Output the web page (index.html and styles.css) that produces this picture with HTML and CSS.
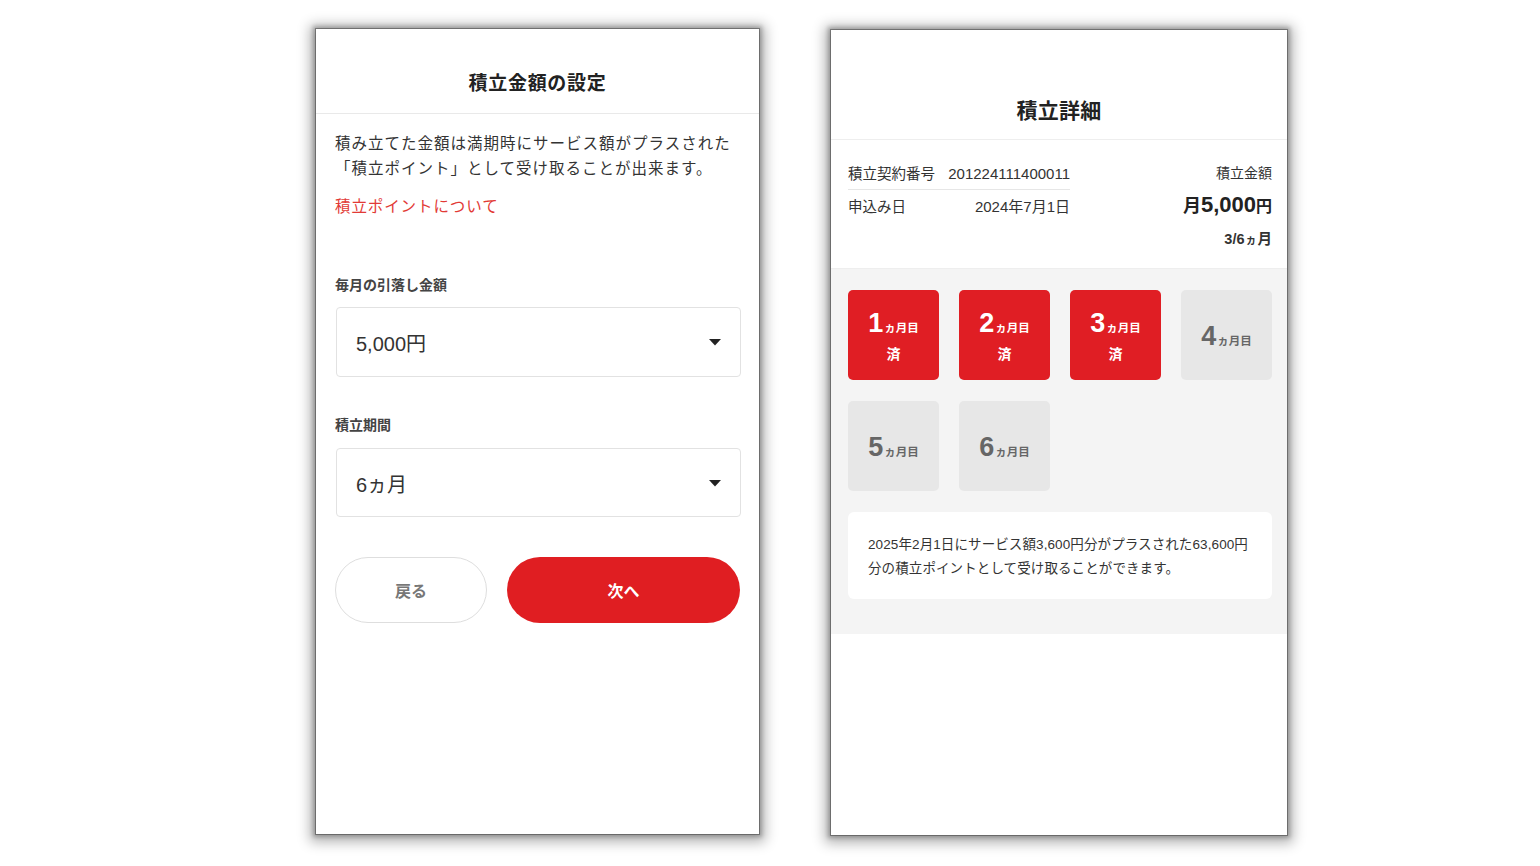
FILE: index.html
```html
<!DOCTYPE html>
<html lang="ja">
<head>
<meta charset="utf-8">
<title>積立</title>
<link rel="stylesheet" href="styles.css">
</head>
<body>
<div class="stage">
  <section class="panel panel-left">
    <header class="panel-head"><h1 class="title">積立金額の設定</h1></header>
    <div class="panel-body">
      <p class="lead">積み立てた金額は満期時にサービス額がプラスされた<br>「積立ポイント」として受け取ることが出来ます。</p>
      <a class="link">積立ポイントについて</a>
      <div class="field-label first">毎月の引落し金額</div>
      <div class="select">
        <span class="select-value">5,000円</span>
        <svg class="caret" width="12" height="7" viewBox="0 0 12 7"><path d="M0 0H12L6 6.5Z" fill="#222"/></svg>
      </div>
      <div class="field-label second">積立期間</div>
      <div class="select select2">
        <span class="select-value">6ヵ月</span>
        <svg class="caret" width="12" height="7" viewBox="0 0 12 7"><path d="M0 0H12L6 6.5Z" fill="#222"/></svg>
      </div>
      <div class="buttons">
        <button class="btn btn-back">戻る</button>
        <button class="btn btn-next">次へ</button>
      </div>
    </div>
  </section>

  <section class="panel panel-right">
    <header class="panel-head head-right"><h1 class="title title-right">積立詳細</h1></header>
    <div class="info">
      <div class="info-left">
        <div class="info-row row1"><span class="k">積立契約番号</span><span class="v">201224111400011</span></div>
        <div class="info-row row2"><span class="k">申込み日</span><span class="v">2024年7月1日</span></div>
      </div>
      <div class="info-right">
        <div class="amt-label">積立金額</div>
        <div class="amt"><span class="amt-pre">月</span><span class="amt-num">5,000</span><span class="amt-yen">円</span></div>
        <div class="amt-prog">3/6<span class="small">ヵ</span>月</div>
      </div>
    </div>
    <div class="gray">
      <div class="tiles">
        <div class="tile done"><div class="tl1"><span class="n">1</span><span class="u">ヵ月目</span></div><div class="tl2">済</div></div>
        <div class="tile done"><div class="tl1"><span class="n">2</span><span class="u">ヵ月目</span></div><div class="tl2">済</div></div>
        <div class="tile done"><div class="tl1"><span class="n">3</span><span class="u">ヵ月目</span></div><div class="tl2">済</div></div>
        <div class="tile"><div class="tl1"><span class="n">4</span><span class="u">ヵ月目</span></div></div>
        <div class="tile"><div class="tl1"><span class="n">5</span><span class="u">ヵ月目</span></div></div>
        <div class="tile"><div class="tl1"><span class="n">6</span><span class="u">ヵ月目</span></div></div>
      </div>
      <div class="note">2025年2月1日にサービス額3,600円分がプラスされた63,600円<br>分の積立ポイントとして受け取ることができます。</div>
    </div>
  </section>
</div>
</body>
</html>
```

FILE: styles.css
```css
* { box-sizing: border-box; }
html, body { margin: 0; padding: 0; background: #fff; }
body {
  font-family: "Liberation Sans", "Noto Sans CJK JP", "Noto Sans", sans-serif;
  color: #333;
  width: 1540px;
  height: 866px;
  overflow: hidden;
}
.stage {
  display: flex;
  align-items: flex-start;
  gap: 72px;
  padding: 29px 0 0 316px;
}
.panel {
  background: #fff;
  height: 805px;
  box-shadow: 0 0 0 1px rgba(0,0,0,0.3), 0 0 4px 3px rgba(0,0,0,0.22), 0 2px 12px 6px rgba(0,0,0,0.3);
}
.panel-left { width: 443px; }
.panel-right { width: 456px; margin-top: 1px; }

.panel-head {
  padding: 41px 0 15px;
  border-bottom: 1px solid #e9e9e9;
  text-align: center;
}
.title {
  margin: 0;
  font-size: 19px;
  line-height: 28px;
  font-weight: 700;
  color: #222;
  letter-spacing: 0.7px;
}
.head-right { padding: 67px 0 14px; border-bottom-color: #eeeeee; }
.title-right { font-size: 21px; letter-spacing: 0.3px; }

.panel-body { padding: 17px 18px 0 19px; }
.lead {
  margin: 0;
  font-size: 15.5px;
  line-height: 25px;
  letter-spacing: 1px;
  color: #333;
}
.link {
  display: block;
  margin-top: 13px;
  font-size: 15.5px;
  line-height: 25px;
  color: #e23a36;
  letter-spacing: 0.9px;
}
.field-label {
  font-size: 14px;
  font-weight: 700;
  line-height: 20px;
  color: #444;
}
.field-label.first { margin-top: 56px; }
.field-label.second { margin-top: 38px; }
.select {
  margin-top: 12px;
  margin-left: 1px;
  height: 70px;
  border: 1px solid #e2e2e2;
  border-radius: 4px;
  display: flex;
  align-items: center;
  justify-content: space-between;
  padding: 0 19px 0 19px;
}
.select2 { margin-top: 13px; height: 69px; }
.select-value { font-size: 20px; color: #333; margin-top: 1px; }
.caret { display: block; margin-top: 1px; }

.buttons {
  display: flex;
  gap: 20px;
  margin-top: 40px;
}
.btn {
  font-family: inherit;
  height: 66px;
  border-radius: 33px;
  font-size: 16px;
  font-weight: 700;
  cursor: pointer;
}
.btn-back {
  width: 152px;
  background: #fff;
  border: 1px solid #dedede;
  color: #777;
}
.btn-next {
  width: 233px;
  background: #e01e22;
  border: none;
  color: #fff;
}

.info {
  display: flex;
  justify-content: space-between;
  padding: 23px 15px 17px 17px;
  border-bottom: 1px solid #eeeeee;
  height: 129px;
}
.info-left { width: 222px; }
.info-row {
  display: flex;
  justify-content: space-between;
  font-size: 15px;
  line-height: 22px;
  color: #333;
}
.info-row .k { font-size: 14.5px; }
.row1 { padding-bottom: 4px; border-bottom: 1px solid #e6e6e6; }
.row2 { padding-top: 6px; }
.info-right { text-align: right; }
.amt-label { font-size: 14px; line-height: 22px; color: #333; margin-top: -1px; }
.amt { line-height: 42px; font-weight: 700; color: #222; }
.amt-pre { font-size: 18px; }
.amt-num { font-size: 22px; }
.amt-yen { font-size: 16px; }
.amt-prog { font-size: 14.5px; font-weight: 700; line-height: 22px; color: #333; }
.amt-prog .small { font-size: 11px; margin: 0 1px; }

.gray {
  background: #f4f4f4;
  padding: 21px 15px 35px 17px;
}
.tiles {
  display: grid;
  grid-template-columns: repeat(4, 91px);
  column-gap: 20px;
  row-gap: 21px;
}
.tile {
  height: 90px;
  border-radius: 5px;
  background: #e7e7e7;
  color: #666;
  display: flex;
  flex-direction: column;
  align-items: center;
  justify-content: center;
  font-weight: 700;
}
.tile.done { background: #e01e24; color: #fff; }
.tl1 { line-height: 30px; height: 30px; white-space: nowrap; margin-top: 2px; }
.tl1 .n { font-size: 27px; }
.tl1 .u { font-size: 11.5px; margin-left: 1px; }
.tl2 { font-size: 14px; line-height: 20px; margin-top: 6px; }
.tile.done .tl1 { margin-top: 2px; }

.note {
  margin-top: 21px;
  background: #fff;
  border-radius: 6px;
  padding: 21px 10px 18px 20px;
  font-size: 13.5px;
  line-height: 24px;
  color: #333;
  letter-spacing: 0.1px;
}
```
